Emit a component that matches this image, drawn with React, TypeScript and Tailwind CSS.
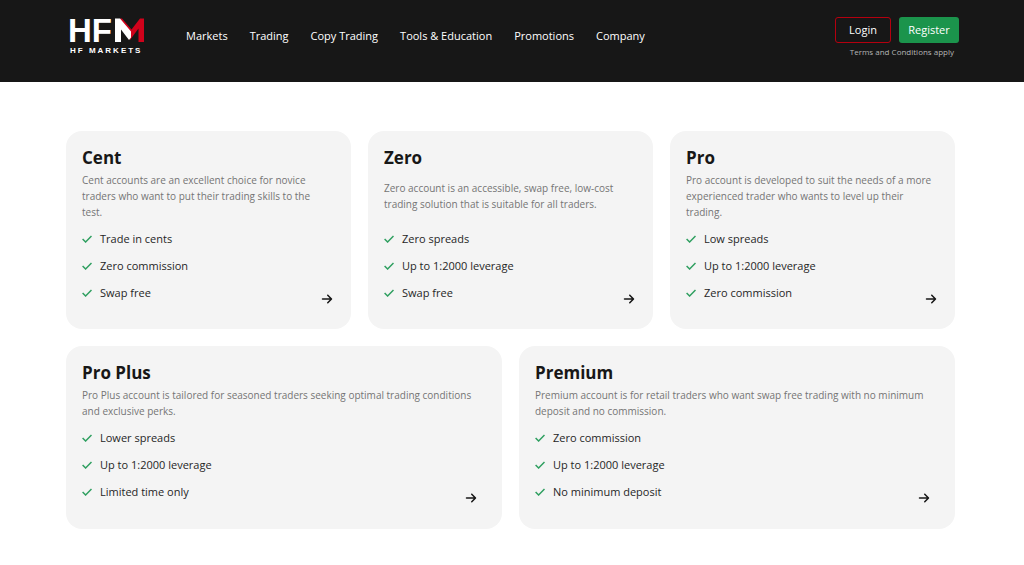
import { FaArrowRight } from 'react-icons/fa6'

interface Account {
  name: string
  description: string
  features: string[]
  wide?: boolean
}

const NAV_ITEMS = ['Markets', 'Trading', 'Copy Trading', 'Tools & Education', 'Promotions', 'Company']

const ACCOUNTS: Account[] = [
  {
    name: 'Cent',
    description: 'Cent accounts are an excellent choice for novice traders who want to put their trading skills to the test.',
    features: ['Trade in cents', 'Zero commission', 'Swap free'],
  },
  {
    name: 'Zero',
    description: 'Zero account is an accessible, swap free, low-cost trading solution that is suitable for all traders.',
    features: ['Zero spreads', 'Up to 1:2000 leverage', 'Swap free'],
  },
  {
    name: 'Pro',
    description: 'Pro account is developed to suit the needs of a more experienced trader who wants to level up their trading.',
    features: ['Low spreads', 'Up to 1:2000 leverage', 'Zero commission'],
  },
  {
    name: 'Pro Plus',
    description: 'Pro Plus account is tailored for seasoned traders seeking optimal trading conditions and exclusive perks.',
    features: ['Lower spreads', 'Up to 1:2000 leverage', 'Limited time only'],
    wide: true,
  },
  {
    name: 'Premium',
    description: 'Premium account is for retail traders who want swap free trading with no minimum deposit and no commission.',
    features: ['Zero commission', 'Up to 1:2000 leverage', 'No minimum deposit'],
    wide: true,
  },
]

function Logo() {
  return (
    <a href="#" aria-label="HFM home" className="block w-[76px] shrink-0">
      <svg viewBox="0 0 76 38" className="block h-[38px] w-full overflow-visible" fontFamily="'Liberation Sans', Arial, sans-serif" fontWeight="bold" fill="#fff">
        <text x="-1" y="25" fontSize="33">HF</text>
        {/* Folded two-tone ribbon */}
        <path d="M51 1.5h2l9.500 11L71 1.500h4V25h-5.500V11.500L61 23l-1-2z" fill="#d0021b" />
        <path d="M46 1.5h5l11 13v6l-2 2.500-8-10.500V25h-6z" />
        <text x="1" y="36" fontSize="8" letterSpacing="2">HF MARKETS</text>
      </svg>
    </a>
  )
}

function Header() {
  return (
    <header className="bg-[#171717] pb-6 pl-[69px] pr-[65px] pt-[17px] text-white">
      <div className="flex items-start">
        <Logo />
        <nav className="ml-[41px] mt-[10px] flex gap-[22px] text-[11px] leading-[18px]">
          {NAV_ITEMS.map((item) => (
            <a key={item} href="#" className="whitespace-nowrap">{item}</a>
          ))}
        </nav>
        <div className="ml-auto">
          <div className="flex justify-end gap-2 text-[11px]">
            <button className="h-[26px] w-[56px] rounded-[3px] border border-[#b5000f]">Login</button>
            <button className="h-[26px] w-[60px] rounded-[3px] bg-[#1b944c]">Register</button>
          </div>
          <p className="mt-[3px] pr-[5px] text-right text-[8px] leading-[12px] text-[#b5b5b5]">Terms and Conditions apply</p>
        </div>
      </div>
    </header>
  )
}

function AccountCard({ account }: { account: Account }) {
  return (
    <article
      className={`flex flex-col rounded-[16px] bg-[#f4f4f4] pl-4 pt-[15px] ${
        account.wide ? 'col-span-3 pb-[23px] pr-[25px]' : 'col-span-2 pb-[22px] pr-[18px]'
      }`}
    >
      <h2 className="text-[17px] font-bold leading-[24px] text-[#171717]">{account.name}</h2>
      <div className={`mt-[2px] flex items-center pr-1 ${account.wide ? 'min-h-[32px]' : 'min-h-[48px]'}`}>
        <p className="text-[10px] leading-[16px] text-[#757575]">{account.description}</p>
      </div>
      <div className="mt-[6px] flex items-end justify-between">
        <ul className="text-[11px] leading-[26px] text-[#262626]">
          {account.features.map((feature) => (
            <li key={feature} className="mb-px flex items-center gap-2">
              <svg viewBox="0 0 10 8" className="h-2 w-[10px]" fill="none" stroke="#2f9f60" strokeWidth="1.5">
                <path d="m.6 4 3 3L9.5 1" />
              </svg>
              {feature}
            </li>
          ))}
        </ul>
        <a href="#" aria-label={`Open ${account.name} account`} className="mb-[2px] text-[12px] text-[#171717]">
          <FaArrowRight />
        </a>
      </div>
    </article>
  )
}

export default function App() {
  return (
    <div className="bg-white font-['Open_Sans',sans-serif]">
      <Header />
      <main className="grid grid-cols-6 gap-[17px] pb-9 pl-[66px] pr-[69px] pt-[49px]">
        {ACCOUNTS.map((account) => (
          <AccountCard key={account.name} account={account} />
        ))}
      </main>
    </div>
  )
}
